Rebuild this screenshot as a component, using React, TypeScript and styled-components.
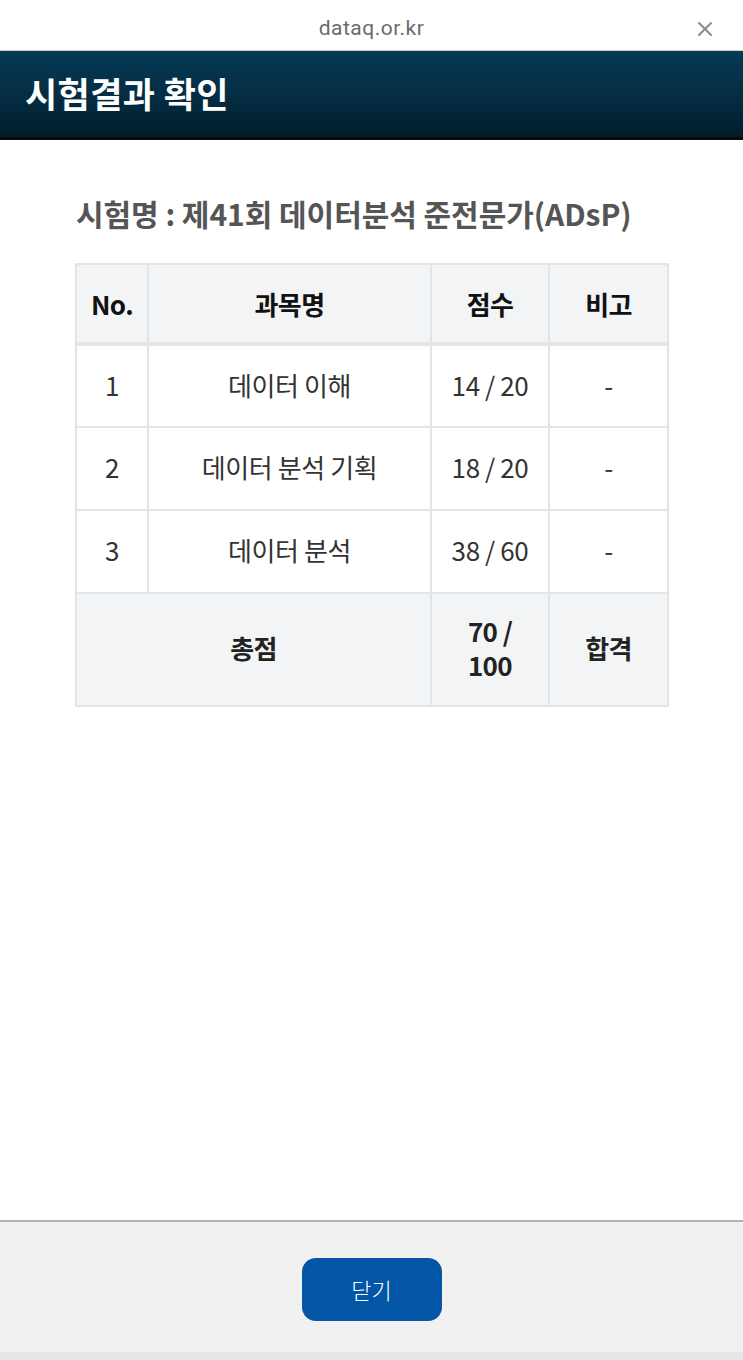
import styled, { createGlobalStyle } from 'styled-components';

const GlobalStyle = createGlobalStyle`
  html, body {
    margin: 0;
    padding: 0;
    background: #ffffff;
  }
  body {
    font-family: "Noto Sans CJK KR", "Noto Sans", sans-serif;
  }
`;

type Subject = { no: number; name: string; score: string; note: string };

const subjects: Subject[] = [
  { no: 1, name: '데이터 이해', score: '14 / 20', note: '-' },
  { no: 2, name: '데이터 분석 기획', score: '18 / 20', note: '-' },
  { no: 3, name: '데이터 분석', score: '38 / 60', note: '-' },
];

export default function App() {
  return (
    <>
      <GlobalStyle />
      <Page>
        <AddressBar>
          <Domain>dataq.or.kr</Domain>
          <CloseX aria-label="close">
            <svg width="16" height="16" viewBox="0 0 16 16">
              <path d="M2 2 L14 14 M14 2 L2 14" stroke="#8a8a8a" strokeWidth="2" strokeLinecap="round" />
            </svg>
          </CloseX>
        </AddressBar>
        <TitleBar>
          <Title>시험결과 확인</Title>
        </TitleBar>
        <Main>
          <ExamName>시험명 : 제41회 데이터분석 준전문가(ADsP)</ExamName>
          <ScoreTable>
            <colgroup>
              <col style={{ width: 72 }} />
              <col style={{ width: 283 }} />
              <col style={{ width: 118 }} />
              <col style={{ width: 119 }} />
            </colgroup>
            <thead>
              <tr>
                <HeadCell>No.</HeadCell>
                <HeadCell>과목명</HeadCell>
                <HeadCell>점수</HeadCell>
                <HeadCell>비고</HeadCell>
              </tr>
            </thead>
            <tbody>
              {subjects.map((s) => (
                <BodyRow key={s.no}>
                  <Cell>{s.no}</Cell>
                  <Cell>{s.name}</Cell>
                  <Cell>{s.score}</Cell>
                  <Cell>{s.note}</Cell>
                </BodyRow>
              ))}
              <TotalRow>
                <TotalCell colSpan={2}>총점</TotalCell>
                <TotalCell>
                  <ScoreLine>70 /</ScoreLine>
                  <ScoreLine>100</ScoreLine>
                </TotalCell>
                <TotalCell>합격</TotalCell>
              </TotalRow>
            </tbody>
          </ScoreTable>
        </Main>
        <Footer>
          <CloseButton>닫기</CloseButton>
        </Footer>
      </Page>
    </>
  );
}

const Page = styled.div`
  display: flex;
  flex-direction: column;
  min-height: 1360px;
`;

const AddressBar = styled.header`
  position: relative;
  height: 50px;
  display: flex;
  align-items: center;
  justify-content: center;
  border-bottom: 1px solid #c9ced2;
  background: #ffffff;
`;

const Domain = styled.span`
  font-family: Roboto, "Noto Sans", sans-serif;
  font-size: 21px;
  color: #6b6b6b;
  margin-top: 6px;
  letter-spacing: 0.5px;
`;

const CloseX = styled.span`
  position: absolute;
  right: 30px;
  top: 21px;
  display: flex;
`;

const TitleBar = styled.div`
  height: 86px;
  display: flex;
  align-items: center;
  padding-left: 25px;
  background: linear-gradient(180deg, #063a55 0%, #042c42 55%, #021d2c 100%);
  border-bottom: 3px solid #050a0d;
`;

const Title = styled.h1`
  margin: 0 0 4px;
  font-size: 35px;
  font-weight: 700;
  color: #ffffff;
  letter-spacing: 0.4px;
`;

const Main = styled.main`
  flex: 1;
  padding: 51px 75px 0 75px;
`;

const ExamName = styled.h2`
  margin: 0 0 28px 1px;
  font-size: 30px;
  font-weight: 700;
  color: #555555;
  letter-spacing: -0.05px;
  line-height: 44px;
`;

const ScoreTable = styled.table`
  width: 594px;
  table-layout: fixed;
  border-collapse: collapse;
  border: 2px solid #e2e5e8;
`;

const HeadCell = styled.th`
  height: 77px;
  padding: 0;
  background: #f3f4f6;
  border: 2px solid #e2e5e8;
  border-bottom: 4px solid #e2e5e8;
  font-size: 26px;
  font-weight: 700;
  color: #111111;
  text-align: center;
  letter-spacing: -0.6px;
`;

const BodyRow = styled.tr`
  height: 83px;
`;

const Cell = styled.td`
  padding: 0 0 4px;
  border: 2px solid #e2e5e8;
  font-size: 26px;
  font-weight: 400;
  color: #333333;
  text-align: center;
  letter-spacing: -0.4px;
`;

const TotalRow = styled.tr`
  height: 113px;
`;

const TotalCell = styled.td`
  padding: 0 0 4px;
  background: #f3f4f6;
  border: 2px solid #e2e5e8;
  font-size: 26px;
  font-weight: 700;
  color: #222222;
  text-align: center;
  letter-spacing: -0.6px;
`;

const ScoreLine = styled.div`
  line-height: 34px;
`;

const Footer = styled.footer`
  height: 130px;
  display: flex;
  align-items: center;
  justify-content: center;
  background: #f1f1f1;
  border-top: 2px solid #b4b4b4;
  border-bottom: 8px solid #e6e6e6;
`;

const CloseButton = styled.button`
  width: 140px;
  height: 63px;
  margin-top: 4px;
  border: none;
  border-radius: 14px;
  background: #0356a6;
  color: #ffffff;
  font-family: "Noto Sans CJK KR", sans-serif;
  font-size: 22px;
  font-weight: 300;
  cursor: pointer;
`;
